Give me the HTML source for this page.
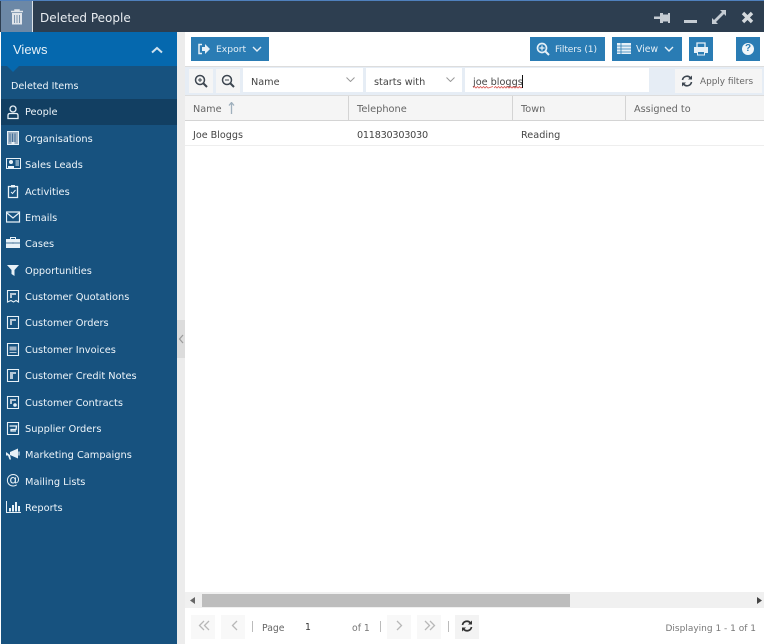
<!DOCTYPE html>
<html><head><meta charset="utf-8"><style>
*{box-sizing:border-box;margin:0;padding:0}
html,body{width:764px;height:644px;overflow:hidden;background:#fff}
body{position:relative;font-family:"DejaVu Sans","Liberation Sans",sans-serif;font-size:9.7px;color:#444}
.a{position:absolute}
.t{position:absolute;white-space:nowrap;line-height:14px;margin-top:1px}
.m{color:#eef5fa;left:25px;font-size:9.800px}
.i{position:absolute;left:6px;width:15px;height:15px}
.b{position:absolute;background:#2a7cb4;color:#e6f0f7;height:24px;top:37px}
.g{position:absolute;background:#f5f5f5}
.p{position:absolute;top:615px;width:24px;height:24px;background:#f8f8f8}
.s{position:absolute;top:621px;width:1px;height:11px;background:#bbb}
</style></head><body>
<div class="a" style="left:0;top:0;width:764px;height:1px;background:#4f80bd"></div>
<div class="a" style="left:0;top:1px;width:764px;height:31px;background:#2d3e50"></div>
<div class="a" style="left:1px;top:1px;width:31px;height:31px;background:#6c88a6"></div>
<div class="a" style="left:32px;top:1px;width:1px;height:31px;background:#dde3e8"></div>
<svg class="a" style="left:10px;top:9px" width="14" height="16" viewBox="0 0 14 16"><path d="M1 2.500H13M5 2.500V1H9V2.500" fill="none" stroke="#e0e5ea" stroke-width="1.500"/><path d="M2 4H12V15.500H2Z" fill="#e0e5ea"/><path d="M4.500 6V14M7 6V14M9.500 6V14" stroke="#7c95ae" stroke-width="1"/></svg>
<div class="t" style="left:40px;top:10px;font-size:12px;color:#e9edf1">Deleted People</div>
<svg class="a" style="left:654px;top:12px" width="17" height="12" viewBox="0 0 17 12"><path d="M0 4.500H6V1H9V2.500H14V1H16V11H14V9.500H9V11H6V7H0Z" fill="#c5ccd3"/></svg>
<div class="a" style="left:684px;top:20px;width:13px;height:3px;background:#c5ccd3"></div>
<svg class="a" style="left:711px;top:9px" width="16" height="16" viewBox="0 0 16 16"><path d="M9 1H15V7L13 5L5 13L7 15H1V9L3 11L11 3Z" fill="#c5ccd3"/></svg>
<svg class="a" style="left:741px;top:11px" width="13" height="13" viewBox="0 0 13 13"><path d="M2 2L11 11M11 2L2 11" stroke="#d5dade" stroke-width="3.400"/></svg>

<div class="a" style="left:1px;top:32px;width:176px;height:612px;background:#17527f"></div>
<div class="a" style="left:1px;top:32px;width:176px;height:34px;background:#0568ae"></div>
<svg class="a" style="left:7px;top:66px" width="12" height="6"><path d="M0 0H12L6 6Z" fill="#0568ae"/></svg>
<div class="t" style="left:13px;top:42px;color:#e6f1f8;font-family:'Liberation Sans',sans-serif;font-size:13px">Views</div>
<svg class="a" style="left:151px;top:46px" width="12" height="8"><path d="M1 6.500L6 2L11 6.500" fill="none" stroke="#cfe1ee" stroke-width="2"/></svg>
<div class="t" style="left:11px;top:79px;color:#eef5fa;font-size:9.600px">Deleted Items</div>
<div class="a" style="left:1px;top:99px;width:176px;height:26px;background:#123f62"></div>

<svg class="i" style="top:105px" viewBox="0 0 15 15"><circle cx="7" cy="4" r="3" fill="none" stroke="#e8f1f7" stroke-width="1.300"/><path d="M2 13.500V10.500Q2 8.500 4 8.500H10Q12 8.500 12 10.500V13.500Z" fill="none" stroke="#e8f1f7" stroke-width="1.300"/></svg>
<div class="t m" style="top:105px">People</div>
<svg class="i" style="top:131px" viewBox="0 0 15 15"><path d="M1.500 .500H12.500V13.500H1.500Z" fill="#9fb3c6" stroke="#e8f1f7"/><path d="M4 2.500V11M6.500 2.500V11M9 2.500V11" stroke="#45719a"/><path d="M5.500 11H8.500V13.500H5.500Z" fill="#e8f1f7"/></svg>
<div class="t m" style="top:132px">Organisations</div>
<svg class="i" style="top:157px" viewBox="0 0 15 15"><path d="M.500 1.500H14.500V11.500H.500Z" fill="#17527f" stroke="#e8f1f7"/><circle cx="5" cy="5" r="2" fill="#e8f1f7"/><path d="M2 11V9H8V11Z" fill="#e8f1f7"/><path d="M9.500 4H13M9.500 6H13M9.500 8H13" stroke="#e8f1f7"/></svg>
<div class="t m" style="top:158px">Sales Leads</div>
<svg class="i" style="top:184px" viewBox="0 0 15 15"><path d="M2.500 2.500H11.500V13.500H2.500Z" fill="none" stroke="#e8f1f7" stroke-width="1.300"/><path d="M5 1H9V3.500H5Z" fill="#e8f1f7"/><path d="M5 8L6.500 9.500L9.500 6" fill="none" stroke="#e8f1f7"/></svg>
<div class="t m" style="top:185px">Activities</div>
<svg class="i" style="top:210px" viewBox="0 0 15 15"><path d="M.500 2H13.500V12H.500Z" fill="none" stroke="#e8f1f7" stroke-width="1.200"/><path d="M1 3L7 8L13 3" fill="none" stroke="#e8f1f7" stroke-width="1.200"/></svg>
<div class="t m" style="top:211px">Emails</div>
<svg class="i" style="top:236px" viewBox="0 0 15 15"><path d="M0 3H14V12H0Z" fill="#e8f1f7"/><path d="M4.500 3V1.500H9.500V3" fill="none" stroke="#e8f1f7"/><path d="M0 7H14" stroke="#17527f" stroke-width=".8"/><path d="M6 6H8V8H6Z" fill="#8aa6bf"/></svg>
<div class="t m" style="top:237px">Cases</div>
<svg class="i" style="top:263px" viewBox="0 0 15 15"><path d="M1 2H13L8.500 7V13L5.500 11V7Z" fill="#e8f1f7"/></svg>
<div class="t m" style="top:264px">Opportunities</div>
<svg class="i" style="top:289px" viewBox="0 0 15 15"><path d="M1.500 1.500H12.500V13L10 11.500L7.500 13L5 11.500L1.500 13Z" fill="none" stroke="#e8f1f7" stroke-width="1.100"/><path d="M4 4H10V6H6V9H4Z" fill="#b6c7d6"/></svg>
<div class="t m" style="top:290px">Customer Quotations</div>
<svg class="i" style="top:315px" viewBox="0 0 15 15"><path d="M1.500 1.500H12.500V13.500H1.500Z" fill="none" stroke="#e8f1f7" stroke-width="1.100"/><path d="M4 4H10V6H6V10H4Z" fill="#b6c7d6"/></svg>
<div class="t m" style="top:316px">Customer Orders</div>
<svg class="i" style="top:342px" viewBox="0 0 15 15"><path d="M1.500 1.500H12.500V13.500H1.500Z" fill="none" stroke="#e8f1f7" stroke-width="1.100"/><path d="M3.500 4.500H10.500V8.500H3.500Z" fill="#9fb3c6"/><path d="M3.500 10.500H10.500" stroke="#b6c7d6"/></svg>
<div class="t m" style="top:343px">Customer Invoices</div>
<svg class="i" style="top:368px" viewBox="0 0 15 15"><path d="M1.500 1.500H12.500V13.500H1.500Z" fill="none" stroke="#e8f1f7" stroke-width="1.100"/><path d="M4 4H10V6H7V11H4Z" fill="#b6c7d6"/></svg>
<div class="t m" style="top:369px">Customer Credit Notes</div>
<svg class="i" style="top:395px" viewBox="0 0 15 15"><path d="M1.500 1.500H12.500V13.500H1.500Z" fill="none" stroke="#e8f1f7" stroke-width="1.100"/><path d="M4 4H10V6H6V9H4Z" fill="#b6c7d6"/><circle cx="9" cy="10" r="1.800" fill="#e8f1f7"/></svg>
<div class="t m" style="top:396px">Customer Contracts</div>
<svg class="i" style="top:421px" viewBox="0 0 15 15"><path d="M1.500 1.500H12.500V13.500H1.500Z" fill="none" stroke="#e8f1f7" stroke-width="1.100"/><path d="M3.500 5H10.500L10 8.500H5V10H10" fill="none" stroke="#e8f1f7" stroke-width="1.300"/></svg>
<div class="t m" style="top:422px">Supplier Orders</div>
<svg class="i" style="top:447px" viewBox="0 0 15 15"><path d="M0 5H4L12 1.500V11.500L4 8V5H0V8.500H2L3.500 12.500H5L4 8Z" fill="#e8f1f7"/><path d="M13 4.500V8.500" stroke="#e8f1f7" stroke-width="1.200"/></svg>
<div class="t m" style="top:448px">Marketing Campaigns</div>
<div class="t" style="left:6px;top:471px;color:#e8f1f7;font-size:14px;line-height:16px">@</div>
<div class="t m" style="top:475px">Mailing Lists</div>
<svg class="i" style="top:500px" viewBox="0 0 15 15"><path d="M.500 1V12.500H15" fill="none" stroke="#e8f1f7"/><path d="M3 8H5V11.500H3ZM6 5H8V11.500H6ZM9 2H11V11.500H9ZM12 6H14V11.500H12Z" fill="#e8f1f7"/></svg>
<div class="t m" style="top:501px">Reports</div>

<div class="a" style="left:177px;top:32px;width:8px;height:612px;background:#ececec"></div>
<div class="a" style="left:177px;top:320px;width:8px;height:38px;background:#dcdcdc"></div>
<svg class="a" style="left:178px;top:334px" width="6" height="10"><path d="M5 1L1.500 5L5 9" fill="none" stroke="#9a9a9a" stroke-width="1.200"/></svg>

<div class="b" style="left:191px;width:78px"></div>
<svg class="a" style="left:197px;top:43px" width="14" height="12" viewBox="0 0 14 12"><path d="M5 1.500H2V10.500H5" fill="none" stroke="#e6f0f7" stroke-width="1.500"/><path d="M5 4H8V1L13 6L8 11V8H5Z" fill="#e6f0f7"/></svg>
<div class="t" style="left:216px;top:42px;color:#e6f0f7;font-size:9.200px">Export</div>
<svg class="a" style="left:252px;top:46px" width="10" height="6"><path d="M1 1L5 5L9 1" fill="none" stroke="#e6f0f7" stroke-width="1.400"/></svg>
<div class="b" style="left:530px;width:75px"></div>
<svg class="a" style="left:536px;top:42px" width="14" height="14" viewBox="0 0 14 14"><circle cx="6" cy="6" r="4.500" fill="none" stroke="#e6f0f7" stroke-width="1.700"/><path d="M9.500 9.500L13 13" stroke="#e6f0f7" stroke-width="2"/><path d="M3.500 6H8.500M6 3.500V8.500" stroke="#e6f0f7" stroke-width="1.200"/></svg>
<div class="t" style="left:555px;top:42px;color:#e6f0f7;font-size:9.100px;letter-spacing:-.1px">Filters (1)</div>
<div class="b" style="left:612px;width:70px"></div>
<svg class="a" style="left:617px;top:43px" width="14" height="11" viewBox="0 0 14 11"><path d="M0 0H14V11H0Z" fill="#e6f0f7"/><path d="M0 3H14M0 6H14M0 9H14M4 0V11" stroke="#2a7cb4" stroke-width=".8"/></svg>
<div class="t" style="left:636px;top:42px;color:#e6f0f7;font-size:9.300px">View</div>
<svg class="a" style="left:664px;top:46px" width="10" height="6"><path d="M1 1L5 5L9 1" fill="none" stroke="#e6f0f7" stroke-width="1.400"/></svg>
<div class="b" style="left:689px;width:24px"></div>
<svg class="a" style="left:694px;top:42px" width="14" height="14" viewBox="0 0 14 14"><path d="M3 1H11V6H3Z" fill="none" stroke="#e6f0f7" stroke-width="1.300"/><path d="M0 5H14V11H11V9H3V11H0Z" fill="#e6f0f7"/><path d="M3.500 9.500H10.500V13H3.500Z" fill="none" stroke="#e6f0f7"/></svg>
<div class="b" style="left:736px;width:24px"></div>
<div class="a" style="left:742px;top:43px;width:12px;height:12px;border-radius:50%;background:#f0f6fa;color:#2a7cb4;font:bold 10px/12px 'Liberation Sans',sans-serif;text-align:center">?</div>

<div class="a" style="left:185px;top:66px;width:579px;height:1px;background:#ddd"></div>
<div class="a" style="left:185px;top:67px;width:579px;height:28px;background:#e6edf5"></div>
<div class="g" style="left:189px;top:69px;width:24px;height:24px"></div>
<div class="g" style="left:216px;top:69px;width:24px;height:24px"></div>
<svg class="a" style="left:194px;top:74px" width="14" height="14" viewBox="0 0 14 14"><circle cx="6" cy="6" r="4.500" fill="none" stroke="#3d4650" stroke-width="1.500"/><path d="M9.500 9.500L13 13" stroke="#3d4650" stroke-width="2"/><path d="M4 6H8M6 4V8" stroke="#3d4650"/></svg>
<svg class="a" style="left:221px;top:74px" width="14" height="14" viewBox="0 0 14 14"><circle cx="6" cy="6" r="4.500" fill="none" stroke="#3d4650" stroke-width="1.500"/><path d="M9.500 9.500L13 13" stroke="#3d4650" stroke-width="2"/><path d="M4 6H8" stroke="#3d4650"/></svg>
<div class="a" style="left:243px;top:68px;width:120px;height:24px;background:#fff"></div>
<div class="t" style="left:251px;top:75px">Name</div>
<svg class="a" style="left:346px;top:77px" width="9" height="5"><path d="M.5 .5L4.500 4.500L8.500 .5" fill="none" stroke="#999"/></svg>
<div class="a" style="left:366px;top:68px;width:96px;height:24px;background:#fff"></div>
<div class="t" style="left:374px;top:75px">starts with</div>
<svg class="a" style="left:446px;top:77px" width="9" height="5"><path d="M.5 .5L4.500 4.500L8.500 .5" fill="none" stroke="#999"/></svg>
<div class="a" style="left:465px;top:68px;width:184px;height:24px;background:#fff"></div>
<div class="t" style="left:473px;top:75px">joe bloggs</div>
<svg class="a" style="left:473px;top:86px" width="50" height="3"><path d="M0 1.500L1.500 .5L3 2L4.500 .5L6 2L7.500 .5L9 2L10.500 .5L12 2L13.500 .5L15 2L20 .5M21 2L22.500 .5L24 2L25.500 .5L27 2L28.500 .5L30 2L31.500 .5L33 2L34.500 .5L36 2L37.500 .5L39 2L40.500 .5L42 2L43.500 .5L45 2L46.500 .5L48 2L50 .5" fill="none" stroke="#d9534f" stroke-width=".8"/></svg>
<div class="a" style="left:522px;top:75px;width:1px;height:13px;background:#111"></div>
<div class="g" style="left:675px;top:69px;width:87px;height:24px"></div>
<svg class="a" style="left:681px;top:75px" width="12" height="12" viewBox="0 0 12 12"><path d="M1.500 5A4.500 4.500 0 0 1 9.500 3M10.500 7A4.500 4.500 0 0 1 2.500 9" fill="none" stroke="#3d4650" stroke-width="1.600"/><path d="M11 .5V4.500H7ZM1 11.500V7.500H5Z" fill="#3d4650"/></svg>
<div class="t" style="left:700px;top:74px;color:#666;font-size:8.900px">Apply filters</div>

<div class="a" style="left:185px;top:95px;width:579px;height:26px;background:#f5f5f5;border-top:1px solid #ddd;border-bottom:1px solid #d4d4d4"></div>
<div class="a" style="left:348px;top:96px;width:1px;height:24px;background:#d4d4d4"></div>
<div class="a" style="left:512px;top:96px;width:1px;height:24px;background:#d4d4d4"></div>
<div class="a" style="left:625px;top:96px;width:1px;height:24px;background:#d4d4d4"></div>
<div class="t" style="left:193px;top:102px;color:#666">Name</div>
<svg class="a" style="left:228px;top:102px" width="7" height="12"><path d="M3.500 1V12M1 3.500L3.500 .5L6 3.500" fill="none" stroke="#9fb0bd" stroke-width="1.300"/></svg>
<div class="t" style="left:357px;top:102px;color:#666;font-size:9.800px">Telephone</div>
<div class="t" style="left:521px;top:102px;color:#666">Town</div>
<div class="t" style="left:634px;top:102px;color:#666">Assigned to</div>
<div class="t" style="left:193px;top:128px;font-size:9.600px">Joe Bloggs</div>
<div class="t" style="left:357px;top:128px;letter-spacing:-.26px">011830303030</div>
<div class="t" style="left:521px;top:128px">Reading</div>
<div class="a" style="left:185px;top:145px;width:579px;height:1px;background:#eee"></div>

<div class="a" style="left:185px;top:592px;width:579px;height:16px;background:#f0f0f0"></div>
<div class="a" style="left:202px;top:594px;width:368px;height:13px;background:#bdbdbd"></div>
<svg class="a" style="left:190px;top:597px" width="5" height="7"><path d="M5 0V7L0 3.500Z" fill="#666"/></svg>
<svg class="a" style="left:757px;top:597px" width="5" height="7"><path d="M0 0V7L5 3.500Z" fill="#444"/></svg>

<div class="p" style="left:191px"></div><div class="p" style="left:221px"></div><div class="p" style="left:387px"></div><div class="p" style="left:417px"></div>
<div class="p" style="left:455px;background:#f3f3f3"></div>
<svg class="a" style="left:198px;top:620px" width="12" height="11"><path d="M6 1L1.500 5.500L6 10M11 1L6.500 5.500L11 10" fill="none" stroke="#b8b8b8" stroke-width="1.300"/></svg>
<svg class="a" style="left:231px;top:620px" width="7" height="11"><path d="M6 1L1.500 5.500L6 10" fill="none" stroke="#b8b8b8" stroke-width="1.300"/></svg>
<svg class="a" style="left:396px;top:620px" width="7" height="11"><path d="M1 1L5.500 5.500L1 10" fill="none" stroke="#b8b8b8" stroke-width="1.300"/></svg>
<svg class="a" style="left:424px;top:620px" width="12" height="11"><path d="M1 1L5.500 5.500L1 10M6 1L10.500 5.500L6 10" fill="none" stroke="#b8b8b8" stroke-width="1.300"/></svg>
<div class="s" style="left:252px"></div><div class="s" style="left:380px"></div><div class="s" style="left:448px"></div>
<div class="t" style="left:262px;top:621px;color:#666;font-size:9.300px">Page</div>
<div class="t" style="left:305px;top:620px;color:#333;font-size:9.300px">1</div>
<div class="t" style="left:352px;top:621px;color:#777;font-size:9.300px">of 1</div>
<svg class="a" style="left:461px;top:620px" width="12" height="12" viewBox="0 0 12 12"><path d="M1.500 5A4.500 4.500 0 0 1 9.500 3M10.500 7A4.500 4.500 0 0 1 2.500 9" fill="none" stroke="#333" stroke-width="1.700"/><path d="M11 .5V4.500H7ZM1 11.500V7.500H5Z" fill="#333"/></svg>
<div class="t" style="right:8px;top:621px;color:#777;font-size:9px">Displaying 1 - 1 of 1</div>
</body></html>
